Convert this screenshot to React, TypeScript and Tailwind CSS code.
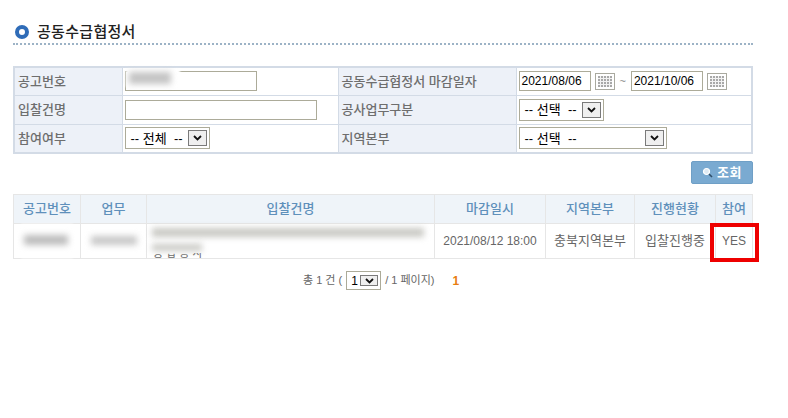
const font = "font-['Liberation_Sans','Noto_Sans_CJK_KR',sans-serif]";

function Chevron() {
  return (
    <svg width="9" height="6" viewBox="0 0 9 6" className="block">
      <path d="M1 1l3.5 3.5L8 1" fill="none" stroke="#111" strokeWidth="1.8" />
    </svg>
  );
}

function FakeSelect({ label, width }: { label: string; width: number }) {
  return (
    <div
      className="flex h-[22px] items-center justify-between border border-[#acab99] bg-white pr-[2px] pl-[5px] text-black"
      style={{ width }}
    >
      <span className="whitespace-pre text-[13px] leading-none">{label}</span>
      <span className="flex h-[16px] w-[19px] items-center justify-center border border-[#7a7a7a] bg-[#efefef]">
        <Chevron />
      </span>
    </div>
  );
}

function CalendarIcon() {
  return (
    <svg width="20" height="17" viewBox="0 0 20 17" className="block shrink-0">
      <rect x="0.5" y="0.5" width="19" height="16" fill="#fff" stroke="#a9a99f" />
      <rect x="3" y="3" width="14" height="11" fill="#a8a8a8" />
      <path
        d="M5.5 3v11M8.5 3v11M11.5 3v11M14.5 3v11M3 5.5h14M3 8.5h14M3 11.5h14"
        stroke="#f2f2f2"
      />
    </svg>
  );
}

function DateInput({ value }: { value: string }) {
  return (
    <div className="flex h-[20px] w-[72px] items-center border border-[#acab99] pl-[2px] text-[12px] text-black">
      {value}
    </div>
  );
}

function Blur({ className }: { className: string }) {
  return <div className={`absolute bg-white ${className}`} />;
}

const labelCell = 'bg-[#edf1f8] pl-[3px] text-[13px] font-medium text-[#6e6e6e] border border-[#d3dbe6]';
const fieldCell = 'border border-[#d3dbe6] pl-[2px]';
const headCell = 'border border-[#e6e6e6] bg-[#eff4f9] text-center text-[13px] font-medium text-[#5f90bb]';
const bodyCell = 'border border-[#e6e6e6] text-center text-[#666]';

export default function App() {
  return (
    <div className={`relative h-[418px] w-[788px] overflow-hidden bg-white ${font}`}>
      <div className="ml-[13px] w-[740px] pt-[20px]">
        <div className="flex h-[23px] items-center pl-[2px]">
          <span className="block h-[14px] w-[14px] rounded-full border-[4px] border-[#2f6cb8] bg-white" />
          <h1 className="ml-[8px] text-[15px] leading-none font-medium tracking-[0.3px] text-[#222]">공동수급협정서</h1>
        </div>
        <div className="h-0 border-t-2 border-dotted border-[#9db3c6]" />

        <table className="mt-[21px] w-[740px] table-fixed border-collapse border-2 border-[#d3dbe6]">
          <colgroup>
            <col className="w-[108px]" />
            <col className="w-[216px]" />
            <col className="w-[178px]" />
            <col />
          </colgroup>
          <tbody>
            <tr className="h-[28px]">
              <td className={labelCell}>공고번호</td>
              <td className={fieldCell}>
                <div className="h-[20px] w-[132px] border border-[#acab99]" />
              </td>
              <td className={labelCell}>공동수급협정서 마감일자</td>
              <td className={fieldCell}>
                <div className="flex items-center">
                  <DateInput value="2021/08/06" />
                  <span className="ml-[4px]"><CalendarIcon /></span>
                  <span className="mx-[5px] text-[11px] text-[#888]">~</span>
                  <DateInput value="2021/10/06" />
                  <span className="ml-[4px]"><CalendarIcon /></span>
                </div>
              </td>
            </tr>
            <tr className="h-[29px]">
              <td className={labelCell}>입찰건명</td>
              <td className={fieldCell}>
                <div className="h-[20px] w-[192px] border border-[#acab99]" />
              </td>
              <td className={labelCell}>공사업무구분</td>
              <td className={fieldCell}>
                <FakeSelect label="-- 선택  --" width={85} />
              </td>
            </tr>
            <tr className="h-[29px]">
              <td className={labelCell}>참여여부</td>
              <td className={fieldCell}>
                <FakeSelect label="-- 전체  --" width={85} />
              </td>
              <td className={labelCell}>지역본부</td>
              <td className={fieldCell}>
                <FakeSelect label="-- 선택  --" width={148} />
              </td>
            </tr>
          </tbody>
        </table>

        <div className="mt-[7px] flex justify-end">
          <button className="flex h-[23px] w-[62px] items-center justify-center gap-[4px] rounded-[2px] border border-[#6f9fc6] bg-[#7aaad1] text-[13px] font-bold tracking-[0.5px] text-white">
            <svg width="11" height="11" viewBox="0 0 11 11" className="block">
              <circle cx="4.5" cy="4.5" r="3" fill="#dfeaf3" stroke="#fff" strokeWidth="1.2" />
              <path d="M7 7l3 3" stroke="#2f4d68" strokeWidth="1.6" />
            </svg>
            조회
          </button>
        </div>

        <table className="mt-[10px] w-[740px] table-fixed border-collapse">
          <colgroup>
            <col className="w-[67px]" />
            <col className="w-[66px]" />
            <col className="w-[288px]" />
            <col className="w-[111px]" />
            <col className="w-[89px]" />
            <col className="w-[81px]" />
            <col />
          </colgroup>
          <thead>
            <tr className="h-[29px]">
              {['공고번호', '업무', '입찰건명', '마감일시', '지역본부', '진행현황', '참여'].map((h) => (
                <th key={h} className={headCell}>{h}</th>
              ))}
            </tr>
          </thead>
          <tbody>
            <tr className="h-[35px]">
              <td className={bodyCell} />
              <td className={bodyCell} />
              <td className={`${bodyCell} text-left`} />
              <td className={`${bodyCell} text-[12px]`}>2021/08/12 18:00</td>
              <td className={`${bodyCell} text-[13px]`}>충북지역본부</td>
              <td className={`${bodyCell} text-[13px]`}>입찰진행중</td>
              <td className={`${bodyCell} text-[12px]`}>YES</td>
            </tr>
          </tbody>
        </table>

        <div className="mt-[12px] flex items-center pl-[290px] text-[11px] text-[#666]">
          <span>총 1 건 (</span>
          <div className="ml-[4px] flex h-[19px] w-[35px] items-center justify-between border border-[#acab99] pr-[2px] pl-[4px] text-[12px] text-black">
            1
            <span className="flex h-[11px] w-[18px] items-center justify-center border border-[#7a7a7a] bg-[#efefef]">
              <Chevron />
            </span>
          </div>
          <span className="ml-[4px]">/ 1 페이지)</span>
          <span className="ml-[18px] text-[12px] font-bold text-[#e87d10]">1</span>
        </div>
      </div>

      {/* redacted bits */}
      <Blur className="left-[126px] top-[69px] h-[18px] w-[54px] blur-[1px]" />
      <div className="absolute left-[129px] top-[72px] h-[12px] w-[42px] bg-[#c4c4c4] blur-[3px]" />
      <Blur className="left-[21px] top-[224px] h-[34px] w-[52px] blur-[1px]" />
      <div className="absolute left-[24px] top-[235px] h-[10px] w-[44px] bg-[#bdbdbd] blur-[3px]" />
      <div className="absolute left-[91px] top-[236px] h-[9px] w-[46px] bg-[#c8c8c8] blur-[3px]" />
      <div className="absolute left-[153px] top-[248px] text-[11px] leading-[11px] whitespace-nowrap text-[#666]">
        종 합 공 사
      </div>
      <Blur className="left-[148px] top-[224px] h-[29px] w-[280px]" />
      <div className="absolute left-[152px] top-[228px] h-[9px] w-[272px] bg-[#c9c9c4] blur-[3px]" />
      <div className="absolute left-[152px] top-[244px] h-[7px] w-[50px] bg-[#c9c9c4] blur-[3px]" />

      {/* red highlight */}
      <div className="absolute left-[710px] top-[223px] h-[39px] w-[49px] border-[4px] border-[#ee0000]" />
    </div>
  );
}
